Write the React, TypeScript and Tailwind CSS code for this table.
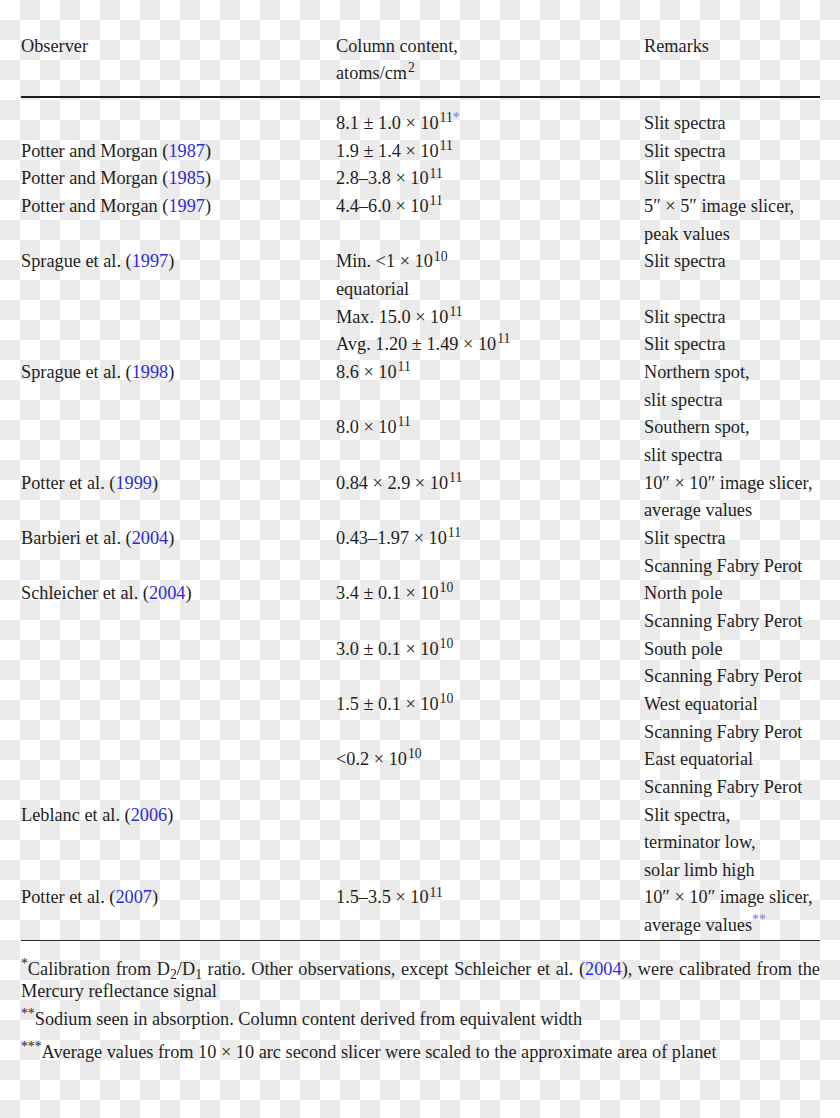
import type { ReactNode } from 'react';

// blue citation year
const Yr = ({ y }: { y: string }) => <span className="text-[#2c2cd6]">{y}</span>;

const Pow = ({ n, mark }: { n: string; mark?: string }) => (
  <>
    10
    <sup className="ml-[1px]">
      {n}
      {mark && <span className="text-[#7474f2]">{mark}</span>}
    </sup>
  </>
);

type Line = [ReactNode, ReactNode, ReactNode];

const lines: Line[] = [
  [null, <>8.1 ± 1.0 × <Pow n="11" mark="*" /></>, 'Slit spectra'],
  [<>Potter and Morgan (<Yr y="1987" />)</>, <>1.9 ± 1.4 × <Pow n="11" /></>, 'Slit spectra'],
  [<>Potter and Morgan (<Yr y="1985" />)</>, <>2.8–3.8 × <Pow n="11" /></>, 'Slit spectra'],
  [<>Potter and Morgan (<Yr y="1997" />)</>, <>4.4–6.0 × <Pow n="11" /></>, '5″ × 5″ image slicer,'],
  [null, null, 'peak values'],
  [<>Sprague et al. (<Yr y="1997" />)</>, <>Min. &lt;1 × <Pow n="10" /></>, 'Slit spectra'],
  [null, 'equatorial', null],
  [null, <>Max. 15.0 × <Pow n="11" /></>, 'Slit spectra'],
  [null, <>Avg. 1.20 ± 1.49 × <Pow n="11" /></>, 'Slit spectra'],
  [<>Sprague et al. (<Yr y="1998" />)</>, <>8.6 × <Pow n="11" /></>, 'Northern spot,'],
  [null, null, 'slit spectra'],
  [null, <>8.0 × <Pow n="11" /></>, 'Southern spot,'],
  [null, null, 'slit spectra'],
  [<>Potter et al. (<Yr y="1999" />)</>, <>0.84 × 2.9 × <Pow n="11" /></>, '10″ × 10″ image slicer,'],
  [null, null, 'average values'],
  [<>Barbieri et al. (<Yr y="2004" />)</>, <>0.43–1.97 × <Pow n="11" /></>, 'Slit spectra'],
  [null, null, 'Scanning Fabry Perot'],
  [<>Schleicher et al. (<Yr y="2004" />)</>, <>3.4 ± 0.1 × <Pow n="10" /></>, 'North pole'],
  [null, null, 'Scanning Fabry Perot'],
  [null, <>3.0 ± 0.1 × <Pow n="10" /></>, 'South pole'],
  [null, null, 'Scanning Fabry Perot'],
  [null, <>1.5 ± 0.1 × <Pow n="10" /></>, 'West equatorial'],
  [null, null, 'Scanning Fabry Perot'],
  [null, <>&lt;0.2 × <Pow n="10" /></>, 'East equatorial'],
  [null, null, 'Scanning Fabry Perot'],
  [<>Leblanc et al. (<Yr y="2006" />)</>, null, 'Slit spectra,'],
  [null, null, 'terminator low,'],
  [null, null, 'solar limb high'],
  [<>Potter et al. (<Yr y="2007" />)</>, <>1.5–3.5 × <Pow n="11" /></>, '10″ × 10″ image slicer,'],
  [
    null,
    null,
    <>
      average values<sup className="text-[#7474f2]">**</sup>
    </>,
  ],
];

const cols = 'grid grid-cols-[315px_308px_176px]';

export default function App() {
  return (
    <div className="h-[1118px] w-full overflow-hidden bg-[repeating-conic-gradient(#ebebeb_0_25%,#fff_0_50%)] bg-size-[40px_40px] font-['Liberation_Serif','Times_New_Roman',serif] text-[18.3px] text-[#1f1f1f]">
      <div className="pl-[21px] pr-[20px] pt-[33px]">
        {/* header */}
        <div className={`${cols} leading-[27.3px]`}>
          <div>Observer</div>
          <div>
            <div>Column content,</div>
            <div>
              atoms/cm<sup className="ml-[1px]">2</sup>
            </div>
          </div>
          <div>Remarks</div>
        </div>

        <div className="mt-[8px] h-[2.5px] bg-[#1c1c1c]" />

        {/* body */}
        <div className="mt-[12px] leading-[27.66px]">
          {lines.map((l, i) => (
            <div key={i} className={`${cols} h-[27.66px] whitespace-nowrap`}>
              <div>{l[0]}</div>
              <div>{l[1]}</div>
              <div>{l[2]}</div>
            </div>
          ))}
        </div>

        <div className="mt-0 h-[1.5px] bg-[#2a2a2a]" />

        {/* footnotes */}
        <div className="mt-[17px] leading-[22px]">
          <div>
            <div className="text-justify [text-align-last:justify] whitespace-nowrap">
              <sup>*</sup>Calibration from D<sub>2</sub>/D<sub>1</sub> ratio. Other observations, except Schleicher et al. (<Yr y="2004" />), were calibrated from the
            </div>
            <div>Mercury reflectance signal</div>
          </div>
          <div className="mt-[6px]">
            <sup>**</sup>Sodium seen in absorption. Column content derived from equivalent width
          </div>
          <div className="mt-[11px]">
            <sup>***</sup>Average values from 10 × 10 arc second slicer were scaled to the approximate area of planet
          </div>
        </div>
      </div>
    </div>
  );
}
